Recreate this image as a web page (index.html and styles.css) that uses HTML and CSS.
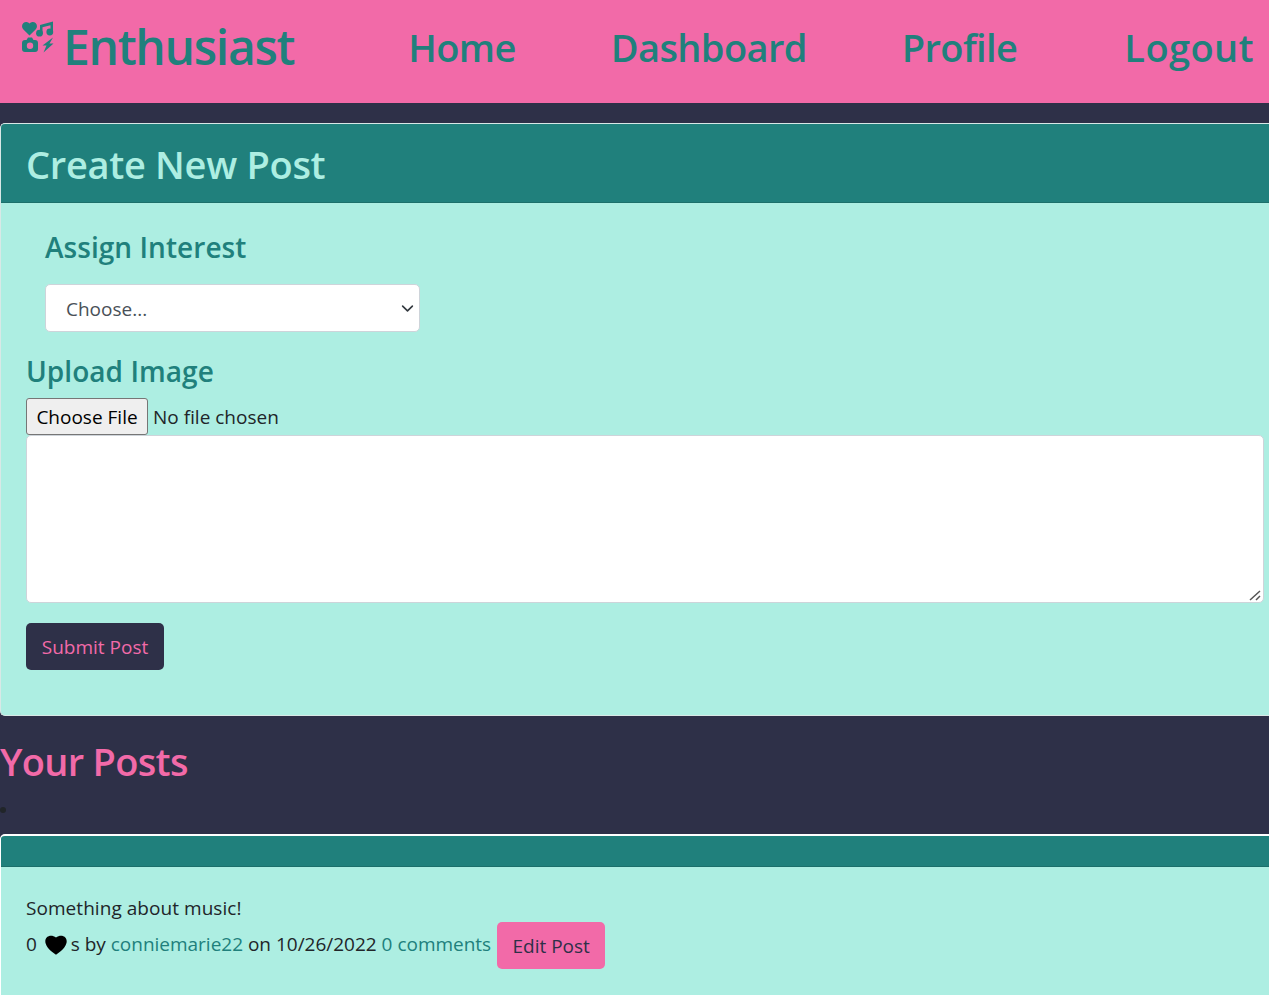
FILE: index.html
```html
<!DOCTYPE html>
<html lang="en">
<head>
<meta charset="utf-8">
<title>Enthusiast</title>
<link rel="stylesheet" href="styles.css">
</head>
<body>
<nav class="navbar">
  <a class="brand" href="#">
    <svg class="brand-icon" viewBox="0 0 32 32" aria-hidden="true">
      <path d="M7.5 14.5 L1.4 8.4 A4.4 4.4 0 0 1 1.4 2 A4.2 4.2 0 0 1 7.5 2.6 A4.2 4.2 0 0 1 13.6 2 A4.4 4.4 0 0 1 13.6 8.4 Z"/>
      <path d="M18 12 V4 L31 0.5 V11 H28.5 V4.2 L20.5 6.3 V12 Z"/>
      <circle cx="17.5" cy="12.2" r="3.4"/>
      <circle cx="27.8" cy="11" r="3.4"/>
      <path fill-rule="evenodd" d="M3 19 H4.5 L6 16.5 H10 L11.5 19 H13 A3 3 0 0 1 16 22 V28 A3 3 0 0 1 13 31 H3 A3 3 0 0 1 0 28 V22 A3 3 0 0 1 3 19 Z M8 21.5 A3.2 3.2 0 1 0 8 27.9 A3.2 3.2 0 1 0 8 21.5 Z"/>
      <path d="M31 16.5 L20.5 24.5 H24.5 L21.5 31.5 L31.5 22.5 H27.5 Z"/>
    </svg>
    <span>Enthusiast</span>
  </a>
  <ul class="nav-links">
    <li><a href="#">Home</a></li>
    <li><a href="#">Dashboard</a></li>
    <li><a href="#">Profile</a></li>
    <li class="nav-last"><a href="#">Logout</a></li>
  </ul>
</nav>
<main>
  <section class="card create-card">
    <h2 class="card-header title">Create New Post</h2>
    <form class="card-body form-body">
      <div class="interest">
        <label class="field-label" for="interest">Assign Interest</label>
        <select id="interest" class="select"><option>Choose...</option></select>
      </div>
      <label class="field-label upload-label" for="image">Upload Image</label>
      <input id="image" class="file" type="file">
      <textarea class="textarea"></textarea>
      <button class="submit" type="button">Submit Post</button>
    </form>
  </section>
  <h2 class="section-title">Your Posts</h2>
  <ul class="posts">
    <li class="post-item">
      <article class="card post-card">
        <div class="card-header post-header"></div>
        <div class="card-body post-body">
          <p class="post-text">Something about music!</p>
          <div class="post-meta">
            <span>0 <svg class="heart" viewBox="0 0 16 16" aria-hidden="true"><path d="M8 15 C-6 6 2-2 8 2.5 C14-2 22 6 8 15 Z"/></svg> s by <a href="#">conniemarie22</a> on 10/26/2022 <a href="#">0 comments</a></span>
            <a class="edit" href="#">Edit Post</a>
          </div>
        </div>
      </article>
    </li>
  </ul>
</main>
</body>
</html>
```

FILE: styles.css
```css
* { box-sizing: border-box; }
html, body { margin: 0; }
body {
  height: 995px;
  overflow: hidden;
  background: #2e3048;
  color: #212529;
  font-family: "Open Sans", "Noto Sans", sans-serif;
  font-size: 19px;
}
a { text-decoration: none; color: #20807c; }

.navbar {
  height: 103px;
  background: #f26aa8;
  display: flex;
  align-items: flex-start;
  padding: 0 15px 0 22px;
}
.brand {
  display: flex;
  align-items: flex-start;
  gap: 9px;
  padding-top: 20px;
  font-size: 48px;
  font-weight: 600;
  line-height: 54px;
  letter-spacing: -1.3px;
}
.brand-icon { width: 32px; height: 32px; flex: none; margin-top: 1px; fill: #20807c; }
.nav-links {
  display: flex;
  flex: 1;
  gap: 95px;
  margin: 0 0 0 114px;
  padding: 23px 0 0;
  list-style: none;
  font-size: 38px;
  font-weight: 600;
  line-height: 48px;
  letter-spacing: -0.6px;
}
.nav-last { margin-left: auto; letter-spacing: 0.4px; }

.card {
  background: #adeee2;
  border: 1px solid #fff;
  border-right: 0;
  border-radius: 5px 0 0 5px;
  overflow: hidden;
}
.card-header { background: #20807c; border-bottom: 1px solid #1c6f6b; }
.create-card { margin-top: 20px; height: 593px; border-color: #d8e8e6; }
.title {
  margin: 0;
  height: 79px;
  padding: 18px 25px 0;
  font-size: 38px;
  font-weight: 600;
  line-height: 44px;
  color: #adeee2;
  letter-spacing: -0.3px;
}
.form-body { padding: 0 5px 0 25px; display: flex; flex-direction: column; align-items: flex-start; }
.interest { padding: 24px 0 0 19px; }
.field-label {
  display: block;
  font-size: 28px;
  font-weight: 600;
  line-height: 40px;
  color: #20807c;
  letter-spacing: 0.05px;
}
.select {
  display: block;
  appearance: none;
  width: 375px;
  height: 48px;
  margin-top: 17px;
  padding: 1px 36px 0 20px;
  background: #fff url("data:image/svg+xml,%3csvg xmlns='http://www.w3.org/2000/svg' viewBox='0 0 16 16'%3e%3cpath fill='none' stroke='%23343a40' stroke-linecap='round' stroke-linejoin='round' stroke-width='2' d='M2 5l6 6 6-6'/%3e%3c/svg%3e") no-repeat right 5px center / 13px 13px;
  border: 1px solid #ced4da;
  border-radius: 5px;
  color: #495057;
  font: inherit;
}
.upload-label { margin-top: 19px; }
.file {
  display: block;
  height: 37px;
  margin-top: 7px;
  font: inherit;
  color: #212529;
}
.file::file-selector-button {
  width: 122px;
  height: 37px;
  padding: 0;
  margin-right: 5px;
  font: inherit;
  background: #efefef;
  border: 1px solid #767676;
  border-radius: 3px;
  color: #000;
}
.textarea {
  display: block;
  width: 100%;
  height: 168px;
  background: #fff;
  border: 1px solid #ced4da;
  border-radius: 5px;
}
.textarea::-webkit-resizer {
  background: url("data:image/svg+xml,%3csvg xmlns='http://www.w3.org/2000/svg' width='15' height='15'%3e%3cpath fill='none' stroke='%23555' stroke-width='1.5' d='M2 13L12 4M8 13l4-4'/%3e%3c/svg%3e") no-repeat;
}
.submit {
  margin-top: 20px;
  width: 138px;
  height: 47px;
  background: #2e3048;
  color: #f26aa8;
  border: 0;
  border-radius: 5px;
  font: inherit;
}

.section-title {
  margin: 0;
  height: 94px;
  padding-top: 19px;
  font-size: 38px;
  font-weight: 600;
  line-height: 52px;
  color: #f26aa8;
  letter-spacing: -0.7px;
}
.posts { margin: 0; padding: 0; list-style: none; }
.post-item { position: relative; padding-top: 24px; }
.post-item::before {
  content: "";
  position: absolute;
  top: -3px;
  left: 0;
  width: 6px;
  height: 6px;
  border-radius: 50%;
  background: #212529;
}
.post-card { height: 170px; border-width: 2px 0 0 1px; }
.post-header { height: 31px; }
.post-body { padding: 25px 25px 0; }
.post-text { margin: 0; line-height: 32px; letter-spacing: 0.05px; }
.post-meta { display: flex; align-items: flex-start; gap: 6px; }
.post-meta > span { line-height: 32px; padding-top: 5px; margin-top: -1px; white-space: nowrap; letter-spacing: -0.01px; }
.heart { width: 22px; height: 22px; vertical-align: -5px; margin: 0 -1px 0 3px; fill: #000; }
.edit {
  display: flex;
  align-items: center;
  justify-content: center;
  width: 108px;
  height: 47px;
  margin-top: -2px;
  background: #f26aa8;
  border-radius: 5px;
  color: #2e3048;
}
```
